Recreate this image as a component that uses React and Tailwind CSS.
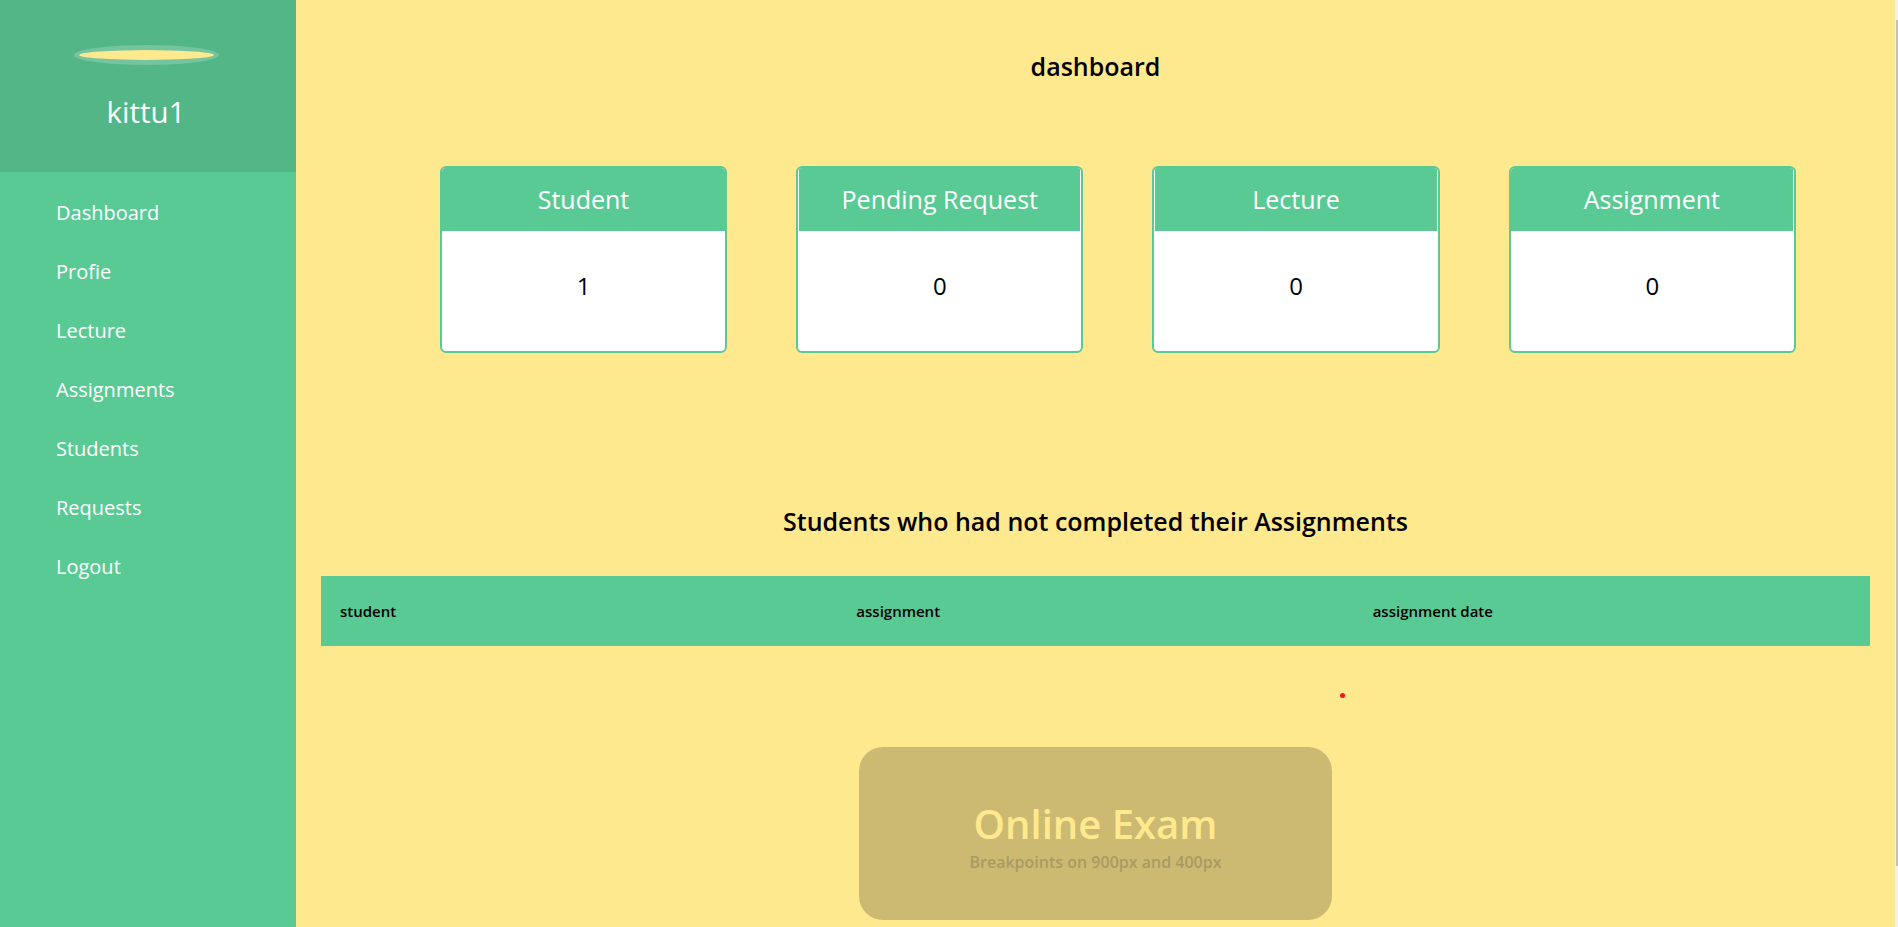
import React from "react";

const navItems = ["Dashboard", "Profie", "Lecture", "Assignments", "Students", "Requests", "Logout"];

const cards = [
  { title: "Student", count: 1, headClass: "" },
  { title: "Pending Request", count: 0, headClass: "mx-px" },
  { title: "Lecture", count: 0, headClass: "mx-px" },
  { title: "Assignment", count: 0, headClass: "mr-px" },
];

const columns = ["student", "assignment", "assignment date"];

const App = () => {
  return (
    <div className="flex h-screen overflow-hidden bg-[#ffe98f] font-['Open_Sans',sans-serif] text-black">
      {/* sidebar */}
      <aside className="w-[296px] shrink-0 bg-[#5aca95] text-white">
        <div className="flex h-[172px] flex-col items-center bg-[#52b687] pt-[45px] pr-[4px]">
          <div className="h-[20px] w-[145px] rounded-[50%] border-[5px] border-white/20 bg-[#ffe98f] bg-clip-padding" />
          <h1 className="mt-[27px] text-[29.5px] leading-[40px]">kittu1</h1>
        </div>
        <nav className="flex flex-col pt-[16px] pl-[56px]">
          {navItems.map((item) => (
            <a key={item} href="#" className="h-[59px] text-[20px] leading-[50px]">
              {item}
            </a>
          ))}
        </nav>
      </aside>

      {/* main content */}
      <main className="flex flex-1 flex-col items-center pt-[49px]">
        <h2 className="text-[25px] leading-[34px] font-semibold">dashboard</h2>

        <div className="mt-[83px] ml-[143.8px] flex gap-[68.9px] self-start">
          {cards.map((card) => (
            <div
              key={card.title}
              className="h-[187px] w-[287.4px] overflow-hidden rounded-[6px] border-2 border-[#5aca95] bg-white"
            >
              <div className={`flex h-[63px] items-center justify-center bg-[#5aca95] text-[25px] text-white ${card.headClass}`}>
                {card.title}
              </div>
              <div className="flex h-[110px] items-center justify-center text-[24px]">{card.count}</div>
            </div>
          ))}
        </div>

        <h2 className="mt-[150px] text-[25px] leading-[36px] font-semibold">
          Students who had not completed their Assignments
        </h2>

        <div className="mt-[37px] grid h-[70px] w-[1549px] grid-cols-3 items-center bg-[#5aca95] pt-[1px] text-[15px] font-semibold">
          {columns.map((col) => (
            <div key={col} className="pl-[19px]">
              {col}
            </div>
          ))}
        </div>

        <div className="flex h-[101px] w-[1549px] pt-[47px] pl-[1019px]">
          <span className="h-[5px] w-[5px] rounded-full bg-[#f01818]" />
        </div>

        <div className="flex h-[173px] w-[473px] flex-col items-center rounded-[24px] bg-[#ccba72] pt-[50px]">
          <h3 className="text-[40px] leading-[54px] font-semibold text-[#ffe98f]">Online Exam</h3>
          <p className="mt-[2px] text-[16px] leading-[18px] font-semibold text-[#a89a63]">Breakpoints on 900px and 400px</p>
        </div>
      </main>

      {/* scrollbar */}
      <div className="flex w-[3px] shrink-0 flex-col bg-[#f1f1f1] py-[20px] pl-px">
        <div className="h-[846px] bg-[#c1c1c1]" />
      </div>
    </div>
  );
};

export default App;
